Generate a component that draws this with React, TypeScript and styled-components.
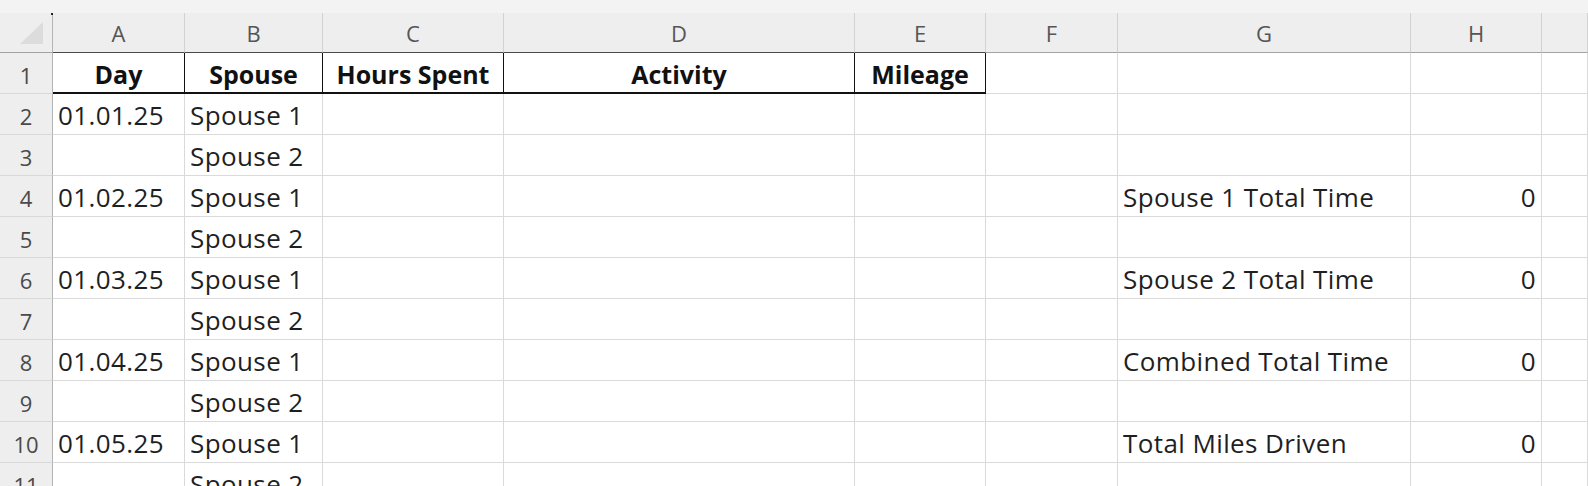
import React from "react";
import styled, { createGlobalStyle, css } from "styled-components";

const GlobalStyle = createGlobalStyle`
  html, body {
    margin: 0;
    padding: 0;
    height: 486px;
    overflow: hidden;
    background: #ffffff;
  }
  body {
    font-family: "Open Sans", Lato, Arial, sans-serif;
  }
`;

const GRID = "#dadada";
const HEAD_BG = "#eeeeee";
const HEAD_LINE = "#d2d2d2";
const INK = "#1f1f1f";

const COLUMNS = ["A", "B", "C", "D", "E", "F", "G", "H", "I"];

const Sheet = styled.div`
  display: grid;
  grid-template-columns: 53px 132px 138px 181px 351px 131px 132px 293px 131px 1fr;
  grid-template-rows: 13px 40px repeat(11, 41px);
  width: 1588px;
  height: 486px;
  overflow: hidden;
  background: #ffffff;
`;

const TopStrip = styled.div`
  grid-column: 1 / -1;
  background: #f4f3f3;
`;

const Corner = styled.div`
  position: relative;
  box-sizing: border-box;
  background: ${HEAD_BG};
  border-right: 1px solid #b4b4b4;
  border-bottom: 1px solid #a3a3a3;
  display: flex;
  align-items: flex-end;
  justify-content: flex-end;
  padding: 0 8px 8px 0;

  &::after {
    content: "";
    position: absolute;
    right: -1px;
    top: 0;
    width: 2px;
    height: 2px;
    background: #222;
  }
`;

const ColHead = styled.div<{ $dark?: boolean }>`
  box-sizing: border-box;
  background: ${HEAD_BG};
  border-right: 1px solid ${HEAD_LINE};
  border-bottom: 1px solid ${(p) => (p.$dark ? "#4a4a4a" : "#a3a3a3")};
  color: #555555;
  font-family: "Open Sans", Lato, Arial, sans-serif;
  font-size: 22px;
  line-height: 39px;
  padding-top: 1px;
  text-align: center;
  overflow: hidden;
`;

const RowHead = styled.div`
  box-sizing: border-box;
  background: ${HEAD_BG};
  border-right: 1px solid #b4b4b4;
  border-bottom: 1px solid #d8d8d8;
  color: #4a4a4a;
  font-family: "Open Sans", Lato, Arial, sans-serif;
  font-size: 22px;
  line-height: 40px;
  padding-top: 2px;
  text-align: center;
  overflow: hidden;
`;

const Cell = styled.div<{ $align?: "left" | "center" | "right"; $title?: boolean; $boxed?: boolean }>`
  box-sizing: border-box;
  border-right: 1px solid ${GRID};
  border-bottom: 1px solid ${GRID};
  color: ${INK};
  font-family: "Open Sans", Lato, Arial, sans-serif;
  font-size: 26px;
  letter-spacing: 0.4px;
  line-height: 40px;
  padding: 1px 5px 0 5px;
  white-space: nowrap;
  overflow: hidden;
  text-align: ${(p) => p.$align ?? "left"};

  ${(p) =>
    p.$title &&
    css`
      font-size: 25px;
      font-weight: 700;
      letter-spacing: 0;
      padding-top: 1px;
      color: #111111;
    `}

  ${(p) =>
    p.$boxed &&
    css`
      border-right: 1px solid #111111;
      border-bottom: 2px solid #111111;
    `}
`;

const SelectAll = () => (
  <svg width="24" height="22" viewBox="0 0 24 22" aria-hidden="true">
    <polygon points="23,0 23,22 0,22" fill="#dcdcdc" />
  </svg>
);

type RowData = {
  day?: string;
  spouse?: string;
  label?: string;
  total?: string;
};

const rows: RowData[] = [
  { day: "01.01.25", spouse: "Spouse 1" },
  { spouse: "Spouse 2" },
  { day: "01.02.25", spouse: "Spouse 1", label: "Spouse 1 Total Time", total: "0" },
  { spouse: "Spouse 2" },
  { day: "01.03.25", spouse: "Spouse 1", label: "Spouse 2 Total Time", total: "0" },
  { spouse: "Spouse 2" },
  { day: "01.04.25", spouse: "Spouse 1", label: "Combined Total Time", total: "0" },
  { spouse: "Spouse 2" },
  { day: "01.05.25", spouse: "Spouse 1", label: "Total Miles Driven", total: "0" },
  { spouse: "Spouse 2" },
];

const titles = ["Day", "Spouse", "Hours Spent", "Activity", "Mileage"];

export default function App() {
  return (
    <>
      <GlobalStyle />
      <Sheet>
        <TopStrip />

        <Corner>
          <SelectAll />
        </Corner>
        {COLUMNS.map((c, i) => (
          <ColHead key={c} $dark={i < 5}>
            {c === "I" ? "" : c}
          </ColHead>
        ))}

        <RowHead>1</RowHead>
        {titles.map((t) => (
          <Cell key={t} $title $boxed $align="center">
            {t}
          </Cell>
        ))}
        <Cell />
        <Cell />
        <Cell />
        <Cell />

        {rows.map((r, i) => (
          <React.Fragment key={i}>
            <RowHead>{i + 2}</RowHead>
            <Cell>{r.day}</Cell>
            <Cell>{r.spouse}</Cell>
            <Cell />
            <Cell />
            <Cell />
            <Cell />
            <Cell>{r.label}</Cell>
            <Cell $align="right">{r.total}</Cell>
            <Cell />
          </React.Fragment>
        ))}
      </Sheet>
    </>
  );
}
